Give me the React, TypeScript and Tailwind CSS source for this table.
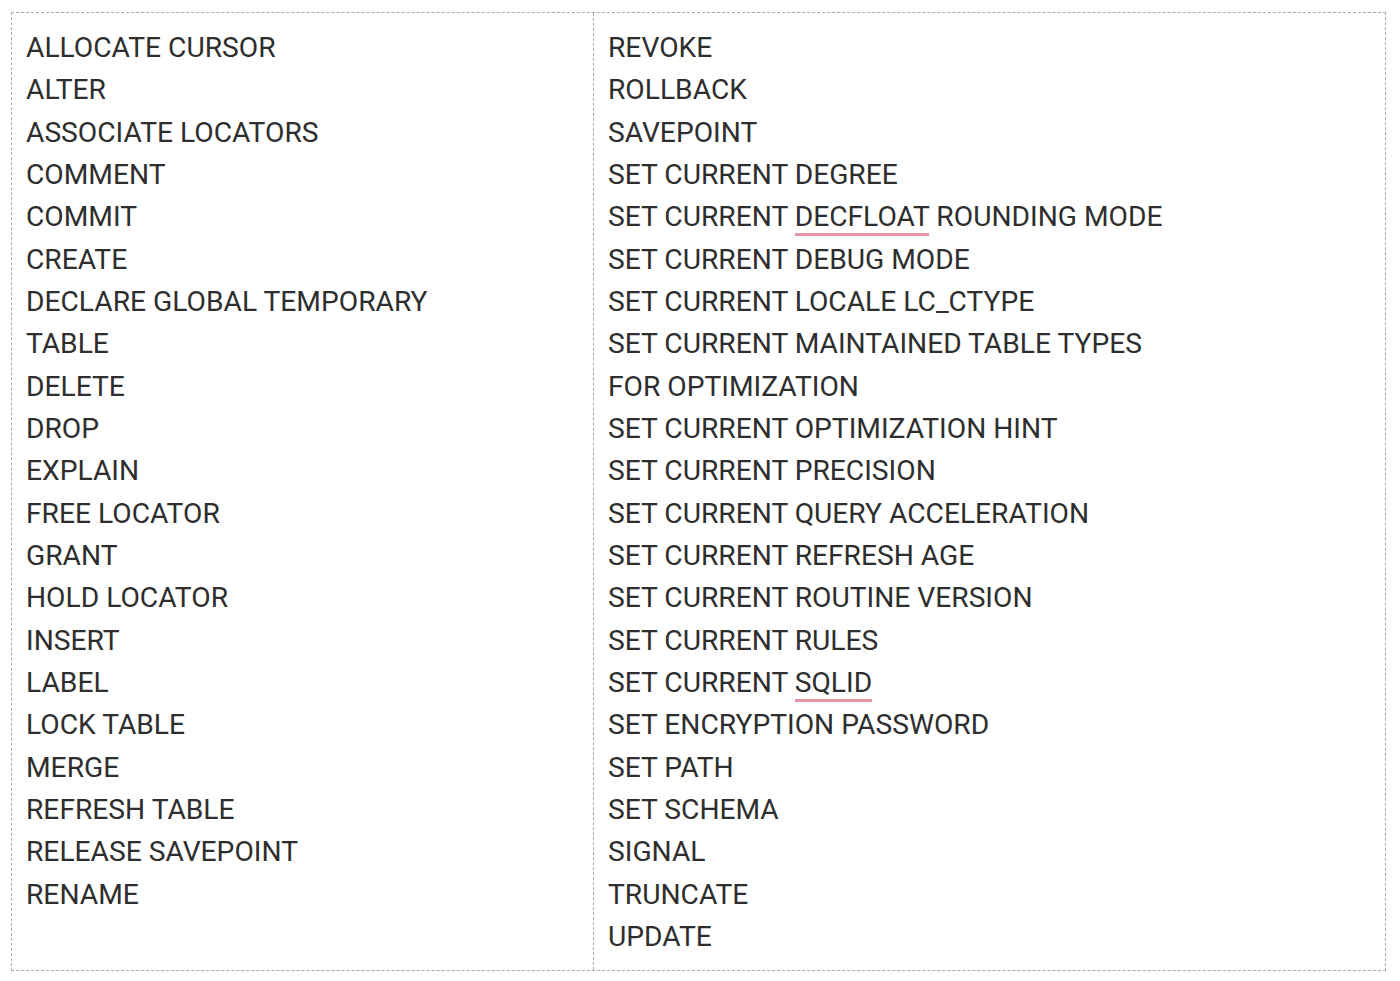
const LEFT = [
  "ALLOCATE CURSOR",
  "ALTER",
  "ASSOCIATE LOCATORS",
  "COMMENT",
  "COMMIT",
  "CREATE",
  "DECLARE GLOBAL TEMPORARY",
  "TABLE",
  "DELETE",
  "DROP",
  "EXPLAIN",
  "FREE LOCATOR",
  "GRANT",
  "HOLD LOCATOR",
  "INSERT",
  "LABEL",
  "LOCK TABLE",
  "MERGE",
  "REFRESH TABLE",
  "RELEASE SAVEPOINT",
  "RENAME",
];

const RIGHT: (string | [string, string, string])[] = [
  "REVOKE",
  "ROLLBACK",
  "SAVEPOINT",
  "SET CURRENT DEGREE",
  ["SET CURRENT ", "DECFLOAT", " ROUNDING MODE"],
  "SET CURRENT DEBUG MODE",
  "SET CURRENT LOCALE LC_CTYPE",
  "SET CURRENT MAINTAINED TABLE TYPES",
  "FOR OPTIMIZATION",
  "SET CURRENT OPTIMIZATION HINT",
  "SET CURRENT PRECISION",
  "SET CURRENT QUERY ACCELERATION",
  "SET CURRENT REFRESH AGE",
  "SET CURRENT ROUTINE VERSION",
  "SET CURRENT RULES",
  ["SET CURRENT ", "SQLID", ""],
  "SET ENCRYPTION PASSWORD",
  "SET PATH",
  "SET SCHEMA",
  "SIGNAL",
  "TRUNCATE",
  "UPDATE",
];

function Line({ item }: { item: string | [string, string, string] }) {
  if (typeof item === "string") return <div>{item}</div>;
  return (
    <div>
      {item[0]}
      <span className="border-b-[3px] border-[#e595a6]">{item[1]}</span>
      {item[2]}
    </div>
  );
}

export default function App() {
  return (
    <div className="w-[1400px] h-[981px] bg-white pl-[11px] pt-[12px]">
      <div
        className="flex w-[1375px] h-[959px] border border-dashed border-[#a9a9a9] text-[#2e2e2e] text-[28.2px] leading-[42.33px]"
        style={{ fontFamily: "Roboto, sans-serif" }}
      >
        <div className="w-[582px] shrink-0 border-r border-dashed border-[#a9a9a9] pl-[14px] pt-[14px]">
          {LEFT.map((t) => (
            <Line key={t} item={t} />
          ))}
        </div>
        <div className="flex-1 pl-[14px] pt-[14px]">
          {RIGHT.map((t, i) => (
            <Line key={i} item={t} />
          ))}
        </div>
      </div>
    </div>
  );
}
